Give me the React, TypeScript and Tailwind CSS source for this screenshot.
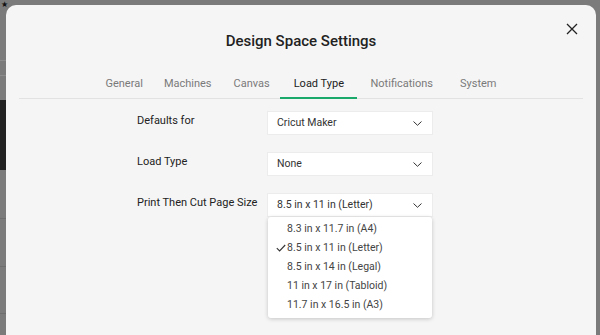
import React from "react";

const tabs: [string, string][] = [
  ["General", "pl-[10px] pr-[10px]"],
  ["Machines", "pl-[11px] pr-[11px]"],
  ["Canvas", "pl-[11px] pr-[10.5px]"],
  ["Load Type", "pl-[13.5px] pr-[13.5px]"],
  ["Notifications", "pl-[13px] pr-[13.5px]"],
  ["System", "pl-[13.5px] pr-[10px]"],
];
const sizes = [
  "8.3 in x 11.7 in (A4)",
  "8.5 in x 11 in (Letter)",
  "8.5 in x 14 in (Legal)",
  "11 in x 17 in (Tabloid)",
  "11.7 in x 16.5 in (A3)",
];

function Chevron() {
  return (
    <svg width="9" height="5" viewBox="0 0 9 5" fill="none" className="shrink-0">
      <path d="M0.8 0.8l3.7 3.5 3.7-3.5" stroke="#333" strokeWidth="1" strokeLinecap="round" strokeLinejoin="round" />
    </svg>
  );
}

function Select({ value, children }: { value: string; children?: React.ReactNode }) {
  return (
    <div className="relative w-[164px]">
      <div className="flex h-[22px] items-center justify-between bg-white pl-[9px] pr-[10px] text-[10.5px] text-[#333] shadow-[0_0_0_1px_#ececec]">
        <span>{value}</span>
        <Chevron />
      </div>
      {children}
    </div>
  );
}

export default function App() {
  return (
    <div
      className="relative h-[335px] w-[600px] overflow-hidden bg-[#7b7b7b]"
      style={{ fontFamily: "Roboto, 'Noto Sans', sans-serif" }}
    >
      {/* backdrop details */}
      <div className="absolute left-0 top-[100px] h-[70px] w-[6px] bg-[#222]" />
      <div className="absolute left-0 top-[60px] h-px w-[6px] bg-[#8c8c8c]" />
      <div className="absolute left-0 top-[75px] h-px w-[6px] bg-[#8c8c8c]" />
      <div className="absolute left-0 top-[218px] h-px w-[6px] bg-[#6e6e6e]" />
      <div className="absolute left-0 top-[266px] h-px w-[6px] bg-[#6e6e6e]" />
      <div className="absolute left-0 top-[313px] h-px w-[6px] bg-[#6e6e6e]" />
      <div className="absolute left-[1px] top-[1px] text-[8px] leading-none text-[#111]">★</div>

      {/* modal */}
      <div className="absolute left-[6px] top-[5px] h-[345px] w-[590px] rounded-[10px] bg-[#f5f5f5]">
        <button className="absolute right-[18px] top-[18px] flex h-[12px] w-[12px] items-center justify-center">
          <svg width="12" height="12" viewBox="0 0 12 12">
            <path d="M1 1l10 10M11 1L1 11" stroke="#222" strokeWidth="1.3" />
          </svg>
        </button>
        <div className="pt-[24px] text-center text-[15px] font-medium leading-[24px] text-[#222]">
          Design Space Settings
        </div>
        <div className="mx-[13px] mt-[23px] flex justify-center border-b border-[#e2e2e2]">
          {tabs.map(([t, px]) => (
            <div
              key={t}
              className={
                "-mb-px border-b-2 pb-[5px] text-[11px] leading-[16px] " +
                px +
                " " +
                (t === "Load Type" ? "border-[#1aa96a] text-[#222]" : "border-transparent text-[#7a7a7a]")
              }
            >
              {t}
            </div>
          ))}
        </div>
        <div className="ml-[131px] mt-[13px] flex flex-col gap-[19px] text-[11px] text-[#222]">
          <div className="flex">
            <div className="w-[131px] pt-[1px] leading-[16px]">Defaults for</div>
            <Select value="Cricut Maker" />
          </div>
          <div className="flex">
            <div className="w-[131px] pt-[1px] leading-[16px]">Load Type</div>
            <Select value="None" />
          </div>
          <div className="flex">
            <div className="w-[131px] pt-[1px] leading-[16px]">Print Then Cut Page Size</div>
            <Select value="8.5 in x 11 in (Letter)">
              <div className="absolute left-0 top-[23px] w-[164px] rounded-[3px] bg-white pb-[4px] pt-[2px] shadow-[0_1px_4px_rgba(0,0,0,0.2)]">
                {sizes.map((s, i) => (
                  <div key={s} className="relative flex h-[19px] items-center pl-[19px] text-[10.5px] text-[#444]">
                    {i === 1 && (
                      <svg className="absolute left-[8px] top-[6px]" width="10" height="8" viewBox="0 0 10 8">
                        <path d="M0.8 4.2l2.8 2.8L9.2 1" stroke="#333" strokeWidth="1.1" fill="none" />
                      </svg>
                    )}
                    {s}
                  </div>
                ))}
              </div>
            </Select>
          </div>
        </div>
      </div>
    </div>
  );
}
